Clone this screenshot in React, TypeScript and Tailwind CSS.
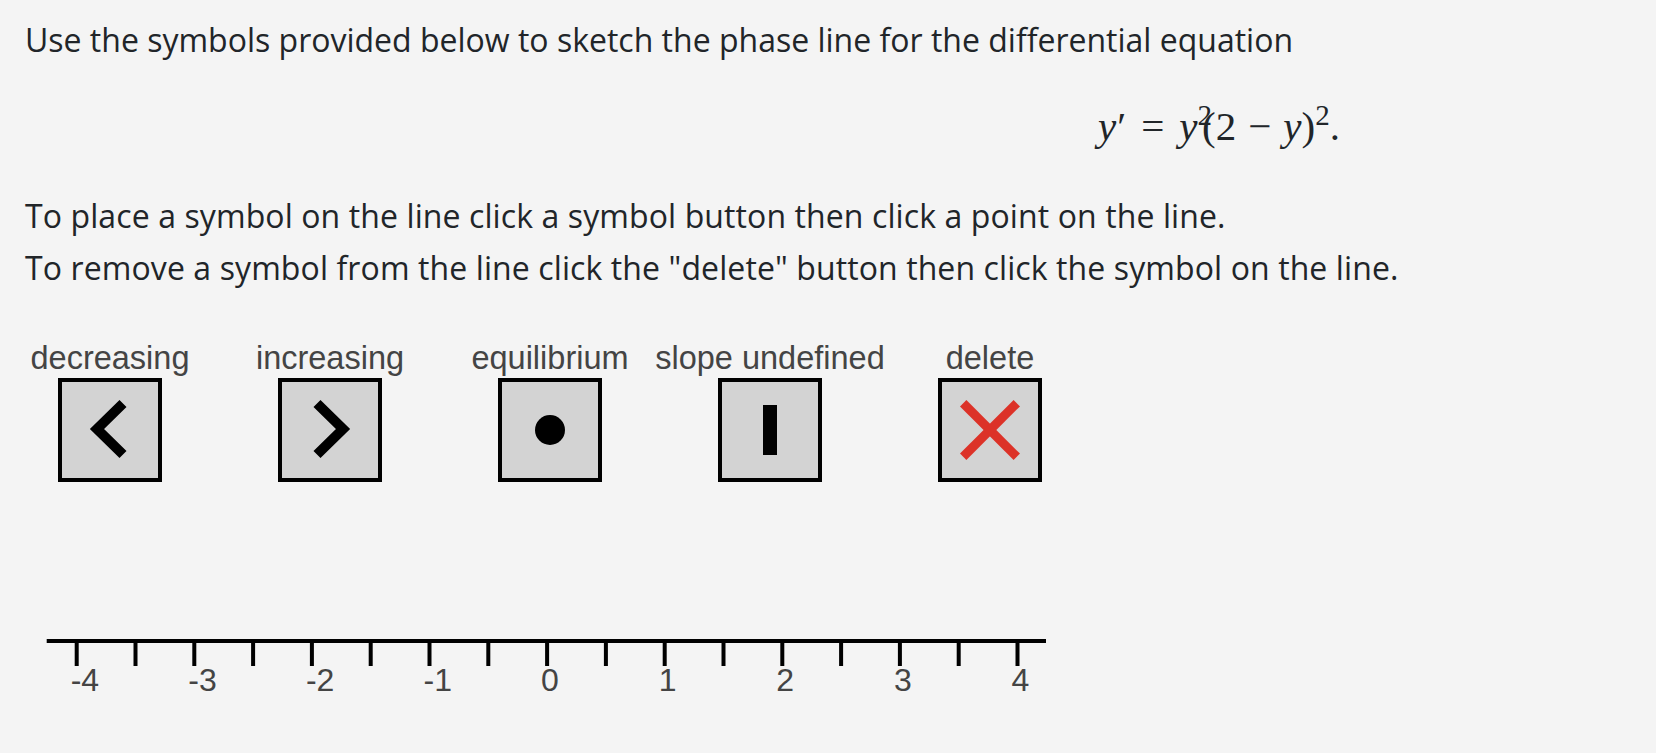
import React from "react";

const ticks = Array.from({ length: 17 }, (_, i) => 76.7 + 58.8 * i);
const labels = [-4, -3, -2, -1, 0, 1, 2, 3, 4];

function Box({ children }: { children: React.ReactNode }) {
  return (
    <div className="w-[104px] h-[104px] border-4 border-black bg-[#d3d3d3] flex items-center justify-center">
      <svg width="96" height="96" viewBox="0 0 96 96">{children}</svg>
    </div>
  );
}

export default function App() {
  const items: { label: string; icon: React.ReactNode }[] = [
    {
      label: "decreasing",
      icon: (
        <polyline points="61,21.5 35,47 61,72.5" fill="none" stroke="#000" strokeWidth="10" strokeLinejoin="miter" strokeLinecap="butt" />
      ),
    },
    {
      label: "increasing",
      icon: (
        <polyline points="35,21.5 61,47 35,72.5" fill="none" stroke="#000" strokeWidth="10" strokeLinejoin="miter" strokeLinecap="butt" />
      ),
    },
    { label: "equilibrium", icon: <circle cx="48" cy="48" r="15" fill="#000" /> },
    { label: "slope undefined", icon: <rect x="41" y="23" width="14" height="50" fill="#000" /> },
    {
      label: "delete",
      icon: (
        <g stroke="#dc3228" strokeWidth="9" strokeLinecap="butt">
          <line x1="21.2" y1="21.2" x2="74.8" y2="74.8" />
          <line x1="74.8" y1="21.2" x2="21.2" y2="74.8" />
        </g>
      ),
    },
  ];

  return (
    <div className="w-full h-[753px] bg-[#f4f4f4] overflow-hidden text-[#212529]">
      <div className="pl-[25px] pt-[14px] font-['Open_Sans',sans-serif] text-[32px] leading-[51.3px]">
        <p>Use the symbols provided below to sketch the phase line for the differential equation</p>
      </div>
      <div className="pt-[40px] pb-[39px] pl-[1098px] font-['Liberation_Serif',serif] text-[41px] leading-[42px] whitespace-nowrap">
        <i>y</i>
        <span className="ml-[1px]">′</span>
        <span className="mx-[15px]">=</span>
        <i>y</i>
        <span className="relative -top-[15px] text-[29px] -mr-[10px]">2</span>
        <span>(2</span>
        <span className="mx-[12px]">−</span>
        <i>y</i>
        <span>)</span>
        <span className="relative -top-[15px] text-[29px]">2</span>
        <span>.</span>
      </div>
      <div className="pl-[25px] font-['Open_Sans',sans-serif] text-[32px] leading-[51.3px] tracking-[0.1px]">
        <p>To place a symbol on the line click a symbol button then click a point on the line.</p>
        <p>To remove a symbol from the line click the "delete" button then click the symbol on the line.</p>
      </div>
      <div className="mt-[47px] flex font-['Liberation_Sans',Arial,sans-serif]">
        {items.map((it) => (
          <div key={it.label} className="w-[220px] flex flex-col items-center">
            <div className="text-[32.5px] leading-[37px] text-[#444] whitespace-nowrap">{it.label}</div>
            <div className="mt-[1px]">
              <Box>{it.icon}</Box>
            </div>
          </div>
        ))}
      </div>
      <svg className="block mt-[137px]" width="1656" height="90" viewBox="0 620 1656 90">
        <rect x="46.7" y="640" width="999.3" height="4" fill="#000" />
        {ticks.map((x, i) => (
          <rect key={i} x={x - 2} y="643" width="4" height="24" fill="#000" />
        ))}
        {labels.map((n, i) => (
          <text
            key={n}
            x={ticks[i * 2] - 6}
            y="691.5"
            fontFamily="Liberation Sans, Arial, sans-serif"
            fontSize="32"
            fill="#444"
          >
            {n}
          </text>
        ))}
      </svg>
    </div>
  );
}
